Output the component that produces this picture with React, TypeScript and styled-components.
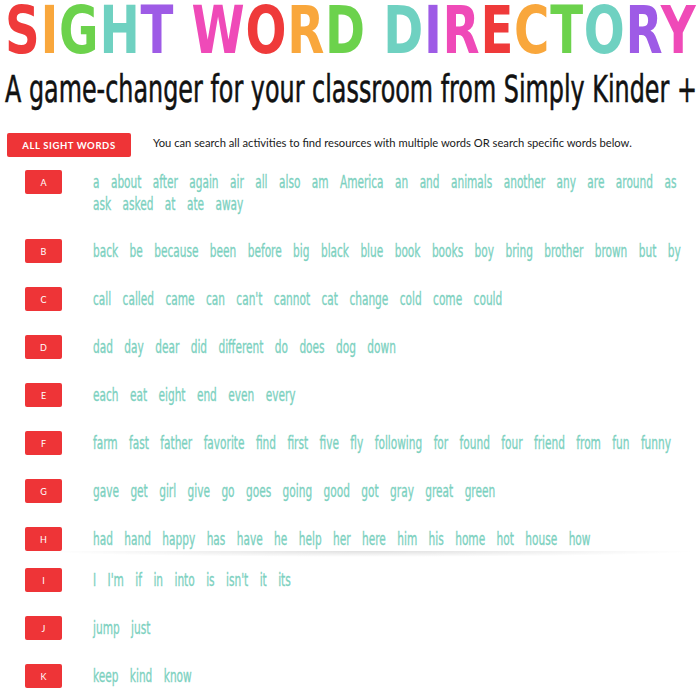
import React from "react";
import styled, { createGlobalStyle } from "styled-components";

const GlobalStyle = createGlobalStyle`
  html, body {
    margin: 0;
    padding: 0;
    background: #ffffff;
  }
  body {
    font-family: "Lato", "Liberation Sans", sans-serif;
    overflow: hidden;
  }
`;

const titleColors = ["#ef3a3a", "#f9a73c", "#6cd24c", "#6fd1c1", "#9e5be6", "#ef4ab8"];

// each row: the letter and its lines of words, as they wrap in the directory
type Row = { letter: string; lines: string[][] };

const firstRows: Row[] = [
  {
    letter: "A",
    lines: [
      ["a", "about", "after", "again", "air", "all", "also", "am", "America", "an", "and", "animals", "another", "any", "are", "around", "as"],
      ["ask", "asked", "at", "ate", "away"],
    ],
  },
  {
    letter: "B",
    lines: [["back", "be", "because", "been", "before", "big", "black", "blue", "book", "books", "boy", "bring", "brother", "brown", "but", "by"]],
  },
  {
    letter: "C",
    lines: [["call", "called", "came", "can", "can't", "cannot", "cat", "change", "cold", "come", "could"]],
  },
  {
    letter: "D",
    lines: [["dad", "day", "dear", "did", "different", "do", "does", "dog", "down"]],
  },
  { letter: "E", lines: [["each", "eat", "eight", "end", "even", "every"]] },
  {
    letter: "F",
    lines: [["farm", "fast", "father", "favorite", "find", "first", "five", "fly", "following", "for", "found", "four", "friend", "from", "fun", "funny"]],
  },
  {
    letter: "G",
    lines: [["gave", "get", "girl", "give", "go", "goes", "going", "good", "got", "gray", "great", "green"]],
  },
  {
    letter: "H",
    lines: [["had", "hand", "happy", "has", "have", "he", "help", "her", "here", "him", "his", "home", "hot", "house", "how"]],
  },
];

const secondRows: Row[] = [
  { letter: "I", lines: [["I", "I'm", "if", "in", "into", "is", "isn't", "it", "its"]] },
  { letter: "J", lines: [["jump", "just"]] },
  { letter: "K", lines: [["keep", "kind", "know"]] },
];

const Page = styled.div`
  width: 700px;
  height: 700px;
  overflow: hidden;
  background: #ffffff;
`;

const Header = styled.header`
  display: flex;
  flex-direction: column;
  align-items: flex-start;
  padding: 0 0 0 5px;
`;

const Title = styled.h1`
  margin: 0;
  width: max-content;
  height: 62px;
  font-family: "DejaVu Sans", "Liberation Sans", sans-serif;
  font-weight: 700;
  font-size: 66px;
  line-height: 62px;
  letter-spacing: 1px;
  white-space: nowrap;
  transform: scaleX(0.73);
  transform-origin: left center;
`;

const TitleLetter = styled.span<{ $color: string }>`
  color: ${(p) => p.$color};
`;

const Subtitle = styled.h2`
  margin: 0;
  width: max-content;
  height: 56px;
  font-family: "DejaVu Sans", "Liberation Sans", sans-serif;
  font-weight: 400;
  font-size: 37px;
  line-height: 56px;
  color: #111111;
  -webkit-text-stroke: 0.6px #111111;
  white-space: nowrap;
  transform: scaleX(0.645);
  transform-origin: left center;
`;

const Toolbar = styled.div`
  display: flex;
  align-items: center;
  gap: 22px;
  padding: 15px 0 0 7px;
`;

const AllButton = styled.button`
  width: 124px;
  height: 24px;
  border: none;
  border-radius: 2px;
  background: #ee3437;
  color: #ffffff;
  font-family: "Lato", "Liberation Sans", sans-serif;
  font-weight: 700;
  font-size: 9.5px;
  letter-spacing: 0.6px;
  padding: 0;
`;

const Note = styled.p`
  margin: 0 0 6px;
  font-family: "Lato", "Liberation Sans", sans-serif;
  font-size: 11.2px;
  color: #1a1a1a;
`;

const Section = styled.section`
  display: flex;
  flex-direction: column;
  gap: 24px;
`;

const TopList = styled(Section)`
  position: relative;
  margin-top: 13px;

  &::after {
    content: "";
    position: absolute;
    left: 40px;
    right: 0;
    bottom: -6px;
    height: 6px;
    background: radial-gradient(ellipse at top, rgba(0, 0, 0, 0.12), rgba(0, 0, 0, 0) 70%);
  }
`;

const BottomList = styled(Section)`
  margin-top: 17px;
`;

const WordRow = styled.div`
  display: flex;
  align-items: flex-start;
  padding-left: 25px;
`;

const Badge = styled.div`
  flex: none;
  width: 37px;
  height: 24px;
  border-radius: 2px;
  background: #ee3437;
  color: #ffffff;
  font-family: "Lato", "Liberation Sans", sans-serif;
  font-size: 9px;
  display: flex;
  align-items: center;
  justify-content: center;
`;

const Words = styled.div`
  display: flex;
  flex-direction: column;
  margin-left: 31px;
  padding-top: 1px;
  transform: scaleX(0.635);
  transform-origin: left top;
`;

const Line = styled.div`
  display: flex;
  column-gap: 18px;
  white-space: nowrap;
`;

const Word = styled.a`
  font-family: "DejaVu Sans Condensed", "DejaVu Sans", sans-serif;
  font-size: 18.5px;
  line-height: 22px;
  color: #7cd1c0;
  -webkit-text-stroke: 0.35px #7cd1c0;
  text-decoration: none;
`;

const renderRows = (rows: Row[]) =>
  rows.map((row) => (
    <WordRow key={row.letter}>
      <Badge>{row.letter}</Badge>
      <Words>
        {row.lines.map((line, li) => (
          <Line key={li}>
            {line.map((w, i) => (
              <Word key={i}>{w}</Word>
            ))}
          </Line>
        ))}
      </Words>
    </WordRow>
  ));

const App: React.FC = () => {
  const title = "SIGHT WORD DIRECTORY";
  let colorIndex = 0;
  return (
    <Page>
      <GlobalStyle />
      <Header>
        <Title>
          {title.split("").map((ch, i) => {
            if (ch === " ") return <span key={i}> </span>;
            const c = titleColors[colorIndex % titleColors.length];
            colorIndex += 1;
            return (
              <TitleLetter key={i} $color={c}>
                {ch}
              </TitleLetter>
            );
          })}
        </Title>
        <Subtitle>A game-changer for your classroom from Simply Kinder +</Subtitle>
      </Header>
      <Toolbar>
        <AllButton>ALL SIGHT WORDS</AllButton>
        <Note>
          You can search all activities to find resources with multiple words OR search specific words below.
        </Note>
      </Toolbar>
      <TopList>{renderRows(firstRows)}</TopList>
      <BottomList>{renderRows(secondRows)}</BottomList>
    </Page>
  );
};

export default App;
